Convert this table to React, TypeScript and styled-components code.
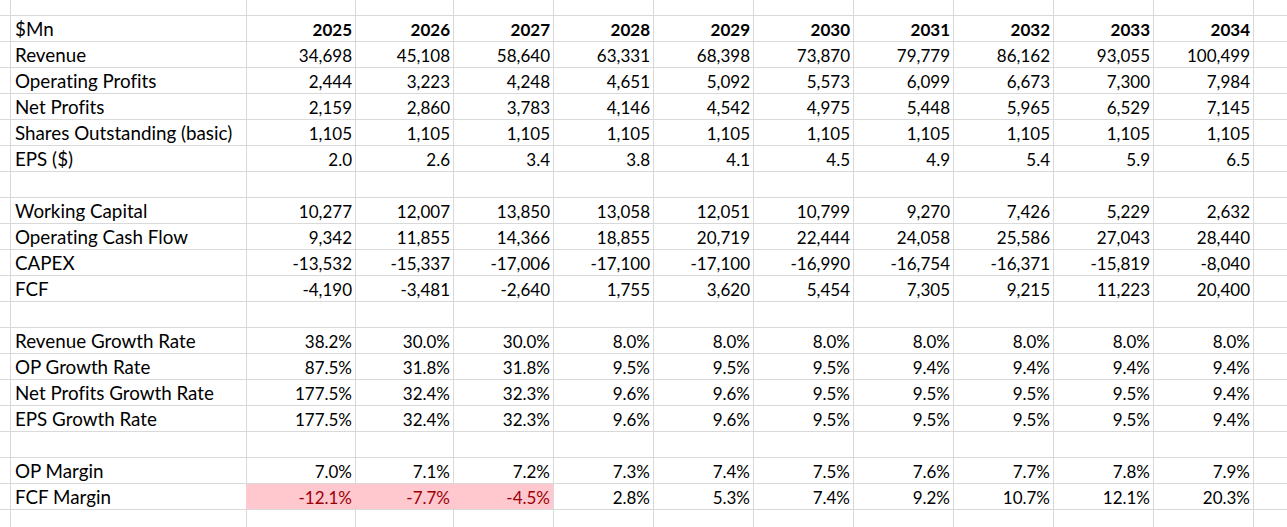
import React from "react";
import styled, { createGlobalStyle, css } from "styled-components";

const GlobalStyle = createGlobalStyle`
  html, body { margin: 0; padding: 0; background: #ffffff; }
  body { overflow: hidden; }
`;

const FONT = `"Lato", "Liberation Sans", sans-serif`;

const Sheet = styled.div`
  display: grid;
  grid-template-columns: 10px 235px 108px 97px repeat(8, 99px) 1fr;
  grid-template-rows: 15px repeat(19, 25px) 1fr;
  gap: 1px;
  width: 1287px;
  height: 527px;
  overflow: hidden;
  background: #d9d9d9;
  font-family: ${FONT};
  font-variant-ligatures: none;
  color: #000000;
`;

const Row = styled.div`
  display: contents;
`;

const Cell = styled.div<{ $align?: "left" | "right"; $bold?: boolean; $bad?: boolean }>`
  background: #ffffff;
  display: flex;
  align-items: flex-end;
  justify-content: ${(p) => (p.$align === "left" ? "flex-start" : "flex-end")};
  padding: 0 3px 3px 4px;
  font-size: 17px;
  line-height: 17px;
  font-weight: ${(p) => (p.$bold ? 700 : 400)};
  white-space: nowrap;
  overflow: hidden;
  ${(p) =>
    p.$bad &&
    css`
      background: #ffc7ce;
      color: #9c0006;
      box-shadow: -1px 0 0 #ffc7ce;
      overflow: visible;
    `}
`;

const Label = styled(Cell)`
  font-size: 18.8px;
  line-height: 18.4px;
  padding-left: 4px;
`;

const Blank = styled.div`
  background: #ffffff;
`;

type RowData = { label: string; values: string[]; bold?: boolean; bad?: number };

const rows: (RowData | null)[] = [
  { label: "$Mn", values: ["2025", "2026", "2027", "2028", "2029", "2030", "2031", "2032", "2033", "2034"], bold: true },
  { label: "Revenue", values: ["34,698", "45,108", "58,640", "63,331", "68,398", "73,870", "79,779", "86,162", "93,055", "100,499"] },
  { label: "Operating Profits", values: ["2,444", "3,223", "4,248", "4,651", "5,092", "5,573", "6,099", "6,673", "7,300", "7,984"] },
  { label: "Net Profits", values: ["2,159", "2,860", "3,783", "4,146", "4,542", "4,975", "5,448", "5,965", "6,529", "7,145"] },
  { label: "Shares Outstanding (basic)", values: Array(10).fill("1,105") },
  { label: "EPS ($)", values: ["2.0", "2.6", "3.4", "3.8", "4.1", "4.5", "4.9", "5.4", "5.9", "6.5"] },
  null,
  { label: "Working Capital", values: ["10,277", "12,007", "13,850", "13,058", "12,051", "10,799", "9,270", "7,426", "5,229", "2,632"] },
  { label: "Operating Cash Flow", values: ["9,342", "11,855", "14,366", "18,855", "20,719", "22,444", "24,058", "25,586", "27,043", "28,440"] },
  { label: "CAPEX", values: ["-13,532", "-15,337", "-17,006", "-17,100", "-17,100", "-16,990", "-16,754", "-16,371", "-15,819", "-8,040"] },
  { label: "FCF", values: ["-4,190", "-3,481", "-2,640", "1,755", "3,620", "5,454", "7,305", "9,215", "11,223", "20,400"] },
  null,
  { label: "Revenue Growth Rate", values: ["38.2%", "30.0%", "30.0%", "8.0%", "8.0%", "8.0%", "8.0%", "8.0%", "8.0%", "8.0%"] },
  { label: "OP Growth Rate", values: ["87.5%", "31.8%", "31.8%", "9.5%", "9.5%", "9.5%", "9.4%", "9.4%", "9.4%", "9.4%"] },
  { label: "Net Profits Growth Rate", values: ["177.5%", "32.4%", "32.3%", "9.6%", "9.6%", "9.5%", "9.5%", "9.5%", "9.5%", "9.4%"] },
  { label: "EPS Growth Rate", values: ["177.5%", "32.4%", "32.3%", "9.6%", "9.6%", "9.5%", "9.5%", "9.5%", "9.5%", "9.4%"] },
  null,
  { label: "OP Margin", values: ["7.0%", "7.1%", "7.2%", "7.3%", "7.4%", "7.5%", "7.6%", "7.7%", "7.8%", "7.9%"] },
  { label: "FCF Margin", values: ["-12.1%", "-7.7%", "-4.5%", "2.8%", "5.3%", "7.4%", "9.2%", "10.7%", "12.1%", "20.3%"], bad: 3 },
];

const BlankRow = () => (
  <Row>
    {Array.from({ length: 13 }).map((_, i) => (
      <Blank key={i} />
    ))}
  </Row>
);

export default function App() {
  return (
    <>
      <GlobalStyle />
      <Sheet>
        <BlankRow />
        {rows.map((r, ri) =>
          r === null ? (
            <BlankRow key={ri} />
          ) : (
            <Row key={ri}>
              <Blank />
              <Label $align="left">{r.label}</Label>
              {r.values.map((v, vi) => (
                <Cell key={vi} $bold={r.bold} $bad={r.bad !== undefined && vi < r.bad}>
                  {v}
                </Cell>
              ))}
              <Blank />
            </Row>
          )
        )}
        <BlankRow />
      </Sheet>
    </>
  );
}
